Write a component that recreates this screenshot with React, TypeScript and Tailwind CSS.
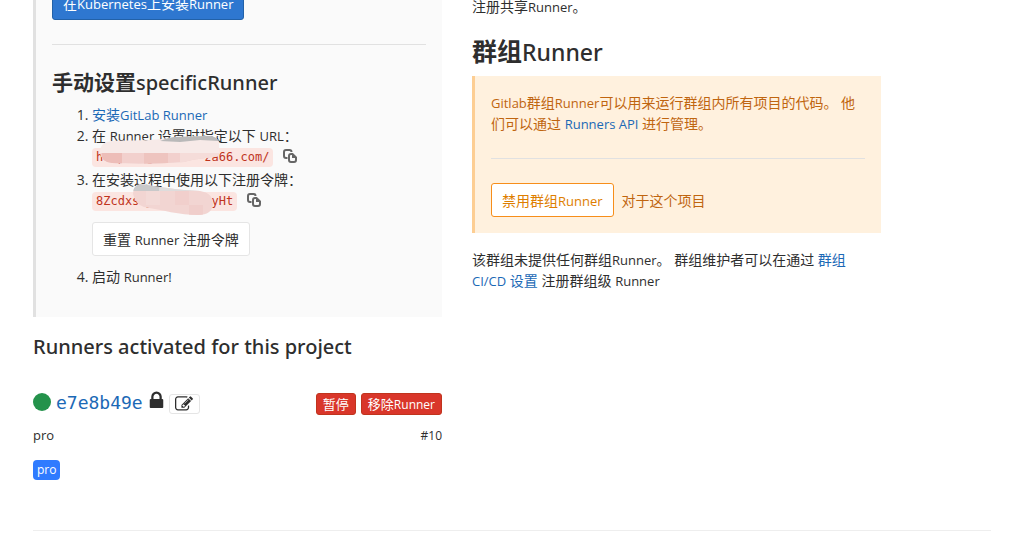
import { ReactNode } from 'react';

function CopyIcon() {
  return (
    <svg width="14" height="14" viewBox="0 0 14 14" fill="none" stroke="#666" strokeWidth="2">
      <path d="M4.500 9H3a2 2 0 0 1-2-2V3a2 2 0 0 1 2-2h3.500a2 2 0 0 1 2 2" />
      <path d="M9.500 5H8a2 2 0 0 0-2 2v4a2 2 0 0 0 2 2h3a2 2 0 0 0 2-2V8.500z" />
      <path d="M9 5v3.500a.5.5 0 0 0 .5.5H13V8L10 5z" fill="#666" stroke="none" />
    </svg>
  );
}

function LockIcon() {
  return (
    <svg className="ml-[3px] -mt-1" width="21" height="21" viewBox="0 0 1792 1792" fill="currentColor">
      <path d="M640 768h512v-192q0-106-75-181t-181-75-181 75-75 181v192zm832 96v576q0 40-28 68t-68 28h-960q-40 0-68-28t-28-68v-576q0-40 28-68t68-28h32v-192q0-184 132-316t316-132 316 132 132 316v192h32q40 0 68 28t28 68z" />
    </svg>
  );
}

function EditIcon() {
  return (
    <svg width="18" height="18" viewBox="0 0 1792 1792" fill="currentColor">
      <path d="M888 1184l116-116-152-152-116 116v56h96v96h56zm440-720q-16-16-33 1l-350 350q-17 17-1 33t33-1l350-350q17-17 1-33zm80 594v190q0 119-84.5 203.5t-203.5 84.500h-832q-119 0-203.500-84.500t-84.500-203.500v-832q0-119 84.500-203.500t203.500-84.500h832q63 0 117 25 15 7 18 23 3 17-9 29l-49 49q-14 14-32 8-23-6-45-6h-832q-66 0-113 47t-47 113v832q0 66 47 113t113 47h832q66 0 113-47t47-113v-126q0-13 9-22l64-64q15-15 35-7t20 29zm-96-738l288 288-672 672h-288v-288zm444 132l-92 92-288-288 92-92q28-28 68-28t68 28l152 152q28 28 28 68t-28 68z" />
    </svg>
  );
}

// Smear that hides the middle of the URL
function UrlMask() {
  return (
    <svg className="absolute left-2 -top-3" width="120" height="29" viewBox="0 0 120 29">
      <defs>
        <clipPath id="url-mask">
          <path d="M12 5 C40 4 54 5 74 1 L108 0 Q119 0 119 8 V20 C108 22 94 23 84 26 C60 28 30 28 12 27 Q1 26 0 16 Q0 6 12 5Z" />
        </clipPath>
      </defs>
      <g clipPath="url(#url-mask)">
        <rect width="120" height="29" fill="#f7eae8" />
        <path d="M60 5 L74 0 H120 V5 L100 4 L80 6Z" fill="#b9b9b9" />
        <rect y="17" width="120" height="12" fill="#f2d0cd" />
        <rect x="2" y="17" width="20" height="12" fill="#edbdb8" />
        <rect x="44" y="17" width="24" height="12" fill="#eec4bf" />
        <rect x="80" y="17" width="40" height="12" fill="#f5dcd9" />
      </g>
    </svg>
  );
}

// Smear over the registration token
function TokenMask() {
  return (
    <svg className="absolute left-10 -top-2" width="82" height="32" viewBox="0 0 82 32">
      <defs>
        <clipPath id="token-mask">
          <path d="M8 0 C28 3 46 6 68 7 Q81 9 81 20 Q80 31 66 31 C48 31 30 26 12 23 Q4 21 1 10 Q1 2 8 0Z" />
        </clipPath>
      </defs>
      <g clipPath="url(#token-mask)">
        <rect width="82" height="32" fill="#f2d5d2" />
        <rect width="27" height="7" fill="#c9c9ca" />
        <rect x="27" width="55" height="7" fill="#dedcdc" />
        <rect x="14" y="7" width="14" height="14" fill="#f3dad7" />
        <rect x="43" y="7" width="14" height="14" fill="#f1cfcc" />
        <rect x="57" y="21" width="14" height="11" fill="#f0cecb" />
      </g>
    </svg>
  );
}

// Latin words run a size smaller than the Chinese around them
function En({ children }: { children: ReactNode }) {
  return <span className="text-[13px] leading-none">{children}</span>;
}

function Secret({ text, mask, label }: { text: string; mask: ReactNode; label: string }) {
  return (
    <div className="flex h-[23px] items-start gap-2">
      <span className="relative mt-0.5 flex">
        <code className="whitespace-pre rounded bg-[#fbe5e1] px-1 font-['DejaVu_Sans_Mono',monospace] text-[12px] leading-[19px] text-[#c0341d]">
          {text}
        </code>
        {mask}
      </span>
      <button className="ml-0.5 mt-[3px]" aria-label={label}>
        <CopyIcon />
      </button>
    </div>
  );
}

export default function App() {
  return (
    <div className="-mt-[14px] overflow-hidden bg-white pl-[33px] pr-[41px] font-['Open_Sans','Noto_Sans_CJK_SC',sans-serif] text-[14px] leading-[21px] text-[#2e2e2e]">
      <div className="mr-[110px] grid grid-cols-2 gap-[30px]">
        <div>
          <section className="h-[331px] border-l-[3px] border-[#e1e1e1] bg-[#fafafa] px-4">
            <button className="h-[34px] whitespace-nowrap rounded-[3px] border border-[#2261a8] bg-[#2e77d0] px-[10px] text-white">
              在<En>Kubernetes</En>上安装<En>Runner</En>
            </button>
            <hr className="my-6 border-[#e1e1e1]" />
            <h4 className="mb-[7px] font-['Noto_Sans','Noto_Sans_CJK_SC',sans-serif] text-[20px] font-medium leading-7">
              <span className="text-[21px] font-bold leading-none">手动设置</span>specificRunner
            </h4>
            <ol className="list-decimal pl-10">
              <li>
                <a href="#" className="text-[#1b69b6]">安装<En>GitLab Runner</En></a>
              </li>
              <li>
                在 <En>Runner</En> 设置时指定以下 <En>URL</En>：
                <Secret text="h  p   g       za66.com/" mask={<UrlMask />} label="复制 URL" />
              </li>
              <li>
                在安装过程中使用以下注册令牌：
                <Secret text="8Zcdxs _        yHt" mask={<TokenMask />} label="复制令牌" />
                <button className="mb-[10px] mt-[9px] block h-[34px] rounded-[3px] border border-[#e5e5e5] bg-white px-[10px]">
                  重置 <En>Runner</En> 注册令牌
                </button>
              </li>
              <li>启动 <En>Runner!</En></li>
            </ol>
          </section>

          <h4 className="mt-4 font-['Noto_Sans','Noto_Sans_CJK_SC',sans-serif] text-[20px] font-medium leading-7">
            Runners activated for this project
          </h4>

          <div className="mt-7 flex items-center">
            <span className="size-[18px] rounded-full bg-[#24924b]" />
            <a href="#" className="ml-[5px] font-['DejaVu_Sans_Mono',monospace] text-[18px] text-[#1b69b6]">e7e8b49e</a>
            <LockIcon />
            <button className="ml-0.5 mt-1 flex h-5 w-[31px] items-center justify-center rounded-[3px] border border-[#e5e5e5]" aria-label="编辑">
              <EditIcon />
            </button>
            <div className="ml-auto mt-1 flex gap-[5px] text-[13px] leading-5 text-white">
              <button className="whitespace-nowrap rounded-[3px] border border-[#c0341d] bg-[#d9362a] px-[6px]">暂停</button>
              <button className="whitespace-nowrap rounded-[3px] border border-[#c0341d] bg-[#d9362a] px-[6px]">
                移除<span className="text-[12px] leading-none">Runner</span>
              </button>
            </div>
          </div>
          <div className="mt-[10px] flex items-center justify-between">
            <En>pro</En>
            <small className="text-[12px]">#10</small>
          </div>
          <span className="mt-[14px] inline-block rounded bg-[#2f7bff] px-1 text-[12px] leading-5 text-white">pro</span>
        </div>

        <div>
          <p className="mt-[10px]">注册共享<En>Runner</En>。</p>
          <h3 className="mb-2 mt-[19px] font-['Noto_Sans','Noto_Sans_CJK_SC',sans-serif] text-[23px] font-medium leading-8">
            <span className="text-[25px] font-bold leading-none">群组</span>Runner
          </h3>
          <section className="border-l-[3px] border-[#fdce93] bg-[#fff1de] p-4 text-[#c0650f]">
            <p>
              <En>Gitlab</En>群组<En>Runner</En>可以用来运行群组内所有项目的代码。 他们可以通过{' '}
              <a href="#" className="text-[#1b69b6]"><En>Runners API</En></a> 进行管理。
            </p>
            <hr className="my-6 border-[#e1e1e1]" />
            <div className="flex items-center gap-2">
              <button className="h-[34px] rounded-[3px] border border-[#f78e1a] bg-white px-[10px] text-[#de7e00]">
                禁用群组<En>Runner</En>
              </button>
              <span>对于这个项目</span>
            </div>
          </section>
          <p className="mt-4">
            该群组未提供任何群组<En>Runner</En>。 群组维护者可以在通过{' '}
            <a href="#" className="text-[#1b69b6]">群组 <En>CI/CD</En> 设置</a> 注册群组级 <En>Runner</En>
          </p>
        </div>
      </div>
      <hr className="mb-3 mt-[50px] border-[#eee]" />
    </div>
  );
}
